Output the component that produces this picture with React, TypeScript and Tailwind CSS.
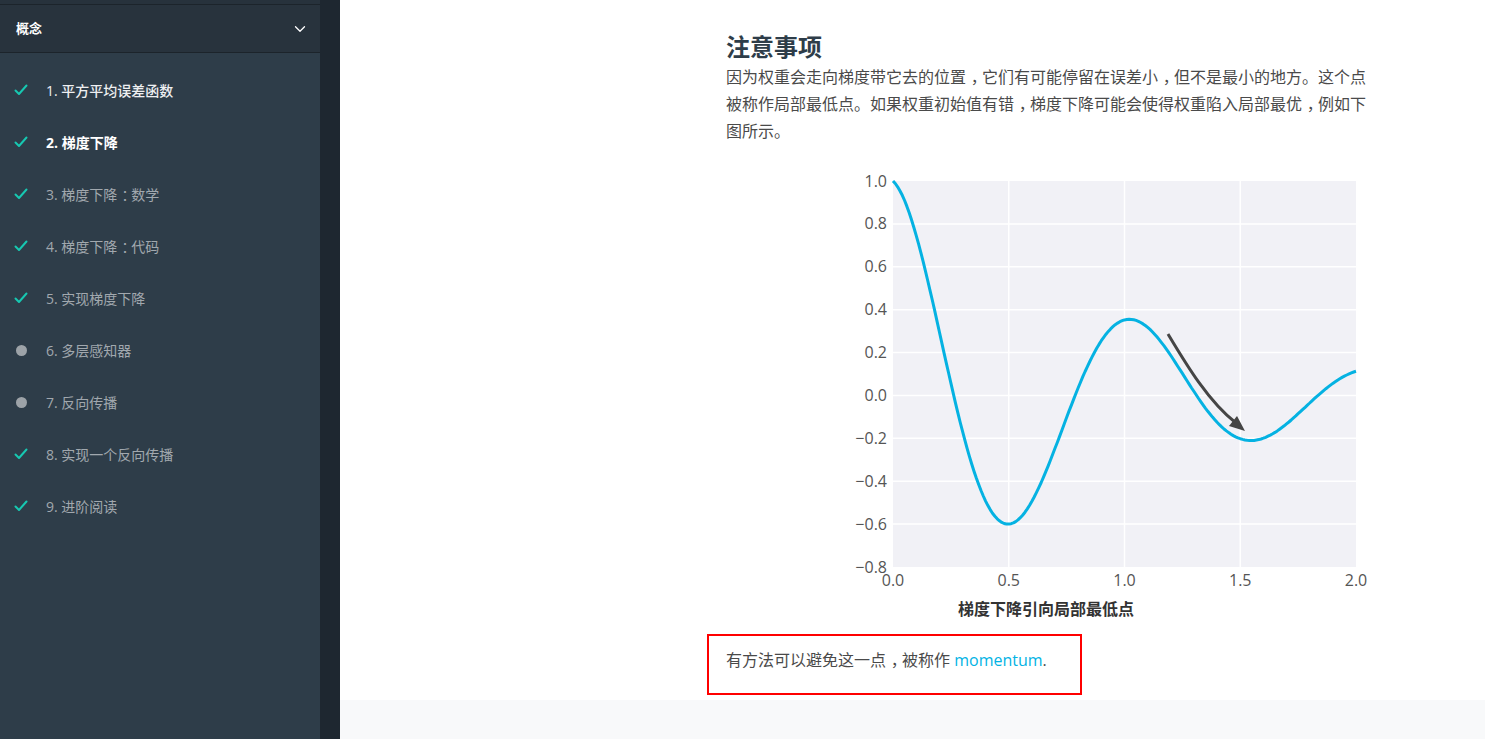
import { ChevronDown } from 'lucide-react';

type Lesson = {
  label: string;
  state: 'done' | 'open';
  tone: 'light' | 'active' | 'muted';
};

const lessons: Lesson[] = [
  { label: '1. 平方平均误差函数', state: 'done', tone: 'light' },
  { label: '2. 梯度下降', state: 'done', tone: 'active' },
  { label: '3. 梯度下降：数学', state: 'done', tone: 'muted' },
  { label: '4. 梯度下降：代码', state: 'done', tone: 'muted' },
  { label: '5. 实现梯度下降', state: 'done', tone: 'muted' },
  { label: '6. 多层感知器', state: 'open', tone: 'muted' },
  { label: '7. 反向传播', state: 'open', tone: 'muted' },
  { label: '8. 实现一个反向传播', state: 'done', tone: 'muted' },
  { label: '9. 进阶阅读', state: 'done', tone: 'muted' },
];

const FONT = { fontFamily: '"Open Sans", "Noto Sans CJK SC", sans-serif' };

// plot box in page pixels
const X0 = 893;
const X1 = 1356;
const Y0 = 181;
const Y1 = 567;
const px = (x: number) => X0 + (x / 2) * (X1 - X0);
const py = (v: number) => Y0 + ((1 - v) / 1.8) * (Y1 - Y0);

const curve = Array.from({ length: 201 }, (_, i) => {
  const x = (i / 200) * 2;
  const v = Math.cos(5.99 * x) * Math.exp(-x);
  return `${i === 0 ? 'M' : 'L'}${px(x).toFixed(1)},${py(v).toFixed(1)}`;
}).join(' ');

const yTicks = [1.0, 0.8, 0.6, 0.4, 0.2, 0.0, -0.2, -0.4, -0.6, -0.8];
const xTicks = [0, 0.5, 1.0, 1.5, 2.0];

// the original centres full-width comma / colon in the em box:
// half-width glyph (halt) padded back out to 1em, ink in the middle
function Cjk({ text }: { text: string }) {
  return (
    <>
      {text.split(/([，：])/).map((part, i) =>
        part === '，' || part === '：' ? (
          <span key={i} className="pl-[0.3em] pr-[0.2em] [font-feature-settings:'halt']">
            {part}
          </span>
        ) : (
          part
        ),
      )}
    </>
  );
}

function CheckMark() {
  return (
    <svg width="14" height="12" viewBox="0 0 14 12" fill="none">
      <path d="M1.5 6.5 L5 10 L12.5 1.5" stroke="#17c8b1" strokeWidth="2" strokeLinecap="round" strokeLinejoin="round" />
    </svg>
  );
}

function Sidebar() {
  return (
    <aside className="flex h-[739px] w-[340px] shrink-0">
      <div className="flex w-[320px] flex-col bg-[#2e3d49]">
        <div className="h-[4px] bg-[#27323c]" />
        <div className="flex h-[49px] items-center justify-between border-y border-[#1c242b] bg-[#28333d] pl-4 pr-[11px]">
          <span className="text-[13px] font-bold text-white">概念</span>
          <ChevronDown size={18} strokeWidth={1.75} className="text-white" />
        </div>
        <ul className="pt-[11px]">
          {lessons.map(l => (
            <li key={l.label} className="flex h-[52px] items-center">
              <span className="flex w-[46px] justify-center pr-[4px]">
                {l.state === 'done' ? <CheckMark /> : <span className="h-[11px] w-[11px] rounded-full bg-[#9da3a8]" />}
              </span>
              <span
                className={
                  l.tone === 'active'
                    ? 'text-[14px] font-bold text-white'
                    : l.tone === 'light'
                      ? 'text-[14px] font-medium text-[#eef0f2]'
                      : 'text-[14px] text-[#a1a8ae]'
                }
              >
                <Cjk text={l.label} />
              </span>
            </li>
          ))}
        </ul>
      </div>
      <div className="w-[20px] bg-[#1e2730]" />
    </aside>
  );
}

function Chart() {
  return (
    <svg width="540" height="430" viewBox="840 160 540 430" className="ml-[114px] block overflow-visible">
      <rect x={X0} y={Y0} width={X1 - X0} height={Y1 - Y0} fill="#f1f1f6" />
      {yTicks.slice(1, -1).map(v => (
        <line key={v} x1={X0} x2={X1} y1={py(v)} y2={py(v)} stroke="#fff" strokeWidth="1.5" />
      ))}
      {xTicks.slice(1, -1).map(x => (
        <line key={x} x1={px(x)} x2={px(x)} y1={Y0} y2={Y1} stroke="#fff" strokeWidth="1.5" />
      ))}
      <path d={curve} fill="none" stroke="#05b2e2" strokeWidth="3" strokeLinejoin="round" />
      <path d="M1168,334 C1186,364 1208,401 1236,423" fill="none" stroke="#454545" strokeWidth="3" />
      <polygon points="1245,431 1229,426 1237,416" fill="#454545" />
      <g fill="#555" fontSize="16" style={FONT}>
        {yTicks.map(v => (
          <text key={v} x={887} y={py(v) + 5.5} textAnchor="end">
            {v < 0 ? '\u2212' : ''}
            {Math.abs(v).toFixed(1)}
          </text>
        ))}
        {xTicks.map(x => (
          <text key={x} x={px(x)} y={586} textAnchor="middle">
            {x.toFixed(1)}
          </text>
        ))}
      </g>
    </svg>
  );
}

export default function App() {
  return (
    <div className="flex h-[739px] w-[1485px] overflow-hidden bg-white" style={FONT}>
      <Sidebar />
      <main className="flex flex-1 flex-col">
        <div className="h-[700px] bg-white pt-[31px]">
          <div className="ml-[386px] w-[640px]">
            <h2 className="text-[24px] leading-[32px] font-bold text-[#2e3d49]">注意事项</h2>
            <p className="mt-[1px] w-[646px] text-[16px] leading-[27px] text-[#4a4a4a]">
              <Cjk text="因为权重会走向梯度带它去的位置，它们有可能停留在误差小，但不是最小的地方。这个点被称作局部最低点。如果权重初始值有错，梯度下降可能会使得权重陷入局部最优，例如下图所示。" />
            </p>
            <div className="mt-[15px]">
              <Chart />
            </div>
            <p className="mt-[7px] text-center text-[16px] leading-[24px] font-bold text-[#333]">
              梯度下降引向局部最低点
            </p>
            <div className="mt-[13px] ml-[-19px] w-[375px] border-2 border-[#ff0000] pt-[11px] pb-[19px] pl-[17px]">
              <p className="text-[16px] leading-[27px] text-[#4a4a4a]">
                <Cjk text="有方法可以避免这一点，被称作 " />
                <span className="text-[#02b3e4]">momentum</span>.
              </p>
            </div>
          </div>
        </div>
        <div className="flex-1 bg-[#f8f9fa]" />
      </main>
    </div>
  );
}
